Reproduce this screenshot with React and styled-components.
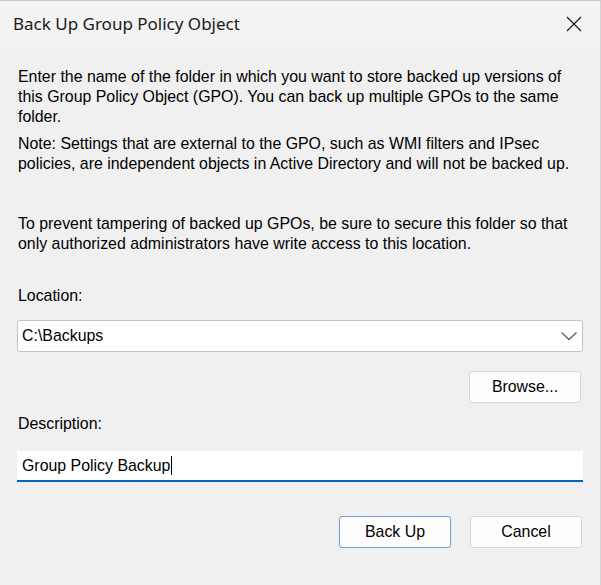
import { createGlobalStyle, styled } from "styled-components";

const GlobalStyle = createGlobalStyle`
  html, body {
    margin: 0;
    padding: 0;
    background: #f0f0f0;
  }
  body {
    font-family: "Liberation Sans", Arial, sans-serif;
  }
`;

const Window = styled.div`
  width: 601px;
  height: 585px;
  box-sizing: border-box;
  background: #f0f0f0;
  border-top: 1px solid #c8c8c8;
  border-right: 1px solid #d4d4d4;
  display: flex;
  flex-direction: column;
  color: #000;
`;

const TitleBar = styled.div`
  height: 46px;
  background: #f3f3f3;
  display: flex;
  align-items: center;
  justify-content: space-between;
  padding: 0 17px 0 13px;
  flex-shrink: 0;
`;

const Title = styled.div`
  font-family: "Noto Sans", "Open Sans", sans-serif;
  font-size: 17px;
  color: #1a1a1a;
  padding-bottom: 2px;
`;

const CloseButton = styled.button`
  border: none;
  background: transparent;
  padding: 0;
  width: 18px;
  height: 18px;
  display: flex;
  align-items: center;
  justify-content: center;
`;

const Body = styled.div`
  padding: 20px 18px 0 18px;
  display: flex;
  flex-direction: column;
`;

const Para = styled.p`
  margin: 0 0 ${(p) => p.$gap ?? 7}px 0;
  font-size: 15.9px;
  line-height: 20px;
  white-space: nowrap;
  color: #000;
`;

const Label = styled.div`
  font-size: 15.9px;
  line-height: 20px;
  margin-top: ${(p) => p.$top || 0}px;
`;

const Combo = styled.div`
  margin-top: 14px;
  margin-left: -1px;
  width: 566px;
  height: 32px;
  box-sizing: border-box;
  background: #fff;
  border: 1px solid #c4c4c4;
  border-radius: 2px;
  display: flex;
  align-items: center;
  justify-content: space-between;
  padding: 0 4px 0 4px;
  font-size: 15.9px;
`;

const TextBox = styled.div`
  margin-top: 17px;
  margin-left: -1px;
  width: 566px;
  height: 31px;
  box-sizing: border-box;
  background: #fff;
  border-bottom: 2px solid #0067c0;
  display: flex;
  align-items: center;
  padding: 0 4px 0 5px;
  font-size: 15.9px;
`;

const Caret = styled.span`
  display: inline-block;
  width: 1px;
  height: 19px;
  background: #000;
  margin-left: 1px;
`;

const ButtonRow = styled.div`
  display: flex;
  justify-content: flex-end;
  gap: ${(p) => p.$gap || 19}px;
  margin-top: ${(p) => p.$top || 0}px;
  padding-right: ${(p) => p.$right ?? 0}px;
`;

const Button = styled.button`
  width: 112px;
  height: 32px;
  box-sizing: border-box;
  background: #fdfdfd;
  border: 1px solid ${(p) => (p.$primary ? "#6b9fd8" : "#d6d6d6")};
  border-radius: 3px;
  font-family: "Liberation Sans", Arial, sans-serif;
  font-size: 15.9px;
  color: #000;
  padding: 0;
`;

export default function App() {
  return (
    <>
      <GlobalStyle />
      <Window>
        <TitleBar>
          <Title>Back Up Group Policy Object</Title>
          <CloseButton aria-label="Close">
            <svg width="16" height="16" viewBox="0 0 16 16">
              <path d="M1 1 L15 15 M15 1 L1 15" stroke="#1a1a1a" strokeWidth="1.2" fill="none" />
            </svg>
          </CloseButton>
        </TitleBar>
        <Body>
          <Para>
            Enter the name of the folder in which you want to store backed up versions of
            <br />
            this Group Policy Object (GPO). You can back up multiple GPOs to the same
            <br />
            folder.
          </Para>
          <Para $gap={40}>
            Note: Settings that are external to the GPO, such as WMI filters and IPsec
            <br />
            policies, are independent objects in Active Directory and will not be backed up.
          </Para>
          <Para $gap={0}>
            To prevent tampering of backed up GPOs, be sure to secure this folder so that
            <br />
            only authorized administrators have write access to this location.
          </Para>
          <Label $top={32}>Location:</Label>
          <Combo>
            <span>C:\Backups</span>
            <svg width="18" height="10" viewBox="0 0 18 10">
              <path d="M1.5 1.5 L9 8.5 L16.5 1.5" stroke="#606060" strokeWidth="1.3" fill="none" />
            </svg>
          </Combo>
          <ButtonRow $top={19} $right={1}>
            <Button>Browse...</Button>
          </ButtonRow>
          <Label $top={11}>Description:</Label>
          <TextBox>
            Group Policy Backup
            <Caret />
          </TextBox>
          <ButtonRow $top={34}>
            <Button $primary>Back Up</Button>
            <Button>Cancel</Button>
          </ButtonRow>
        </Body>
      </Window>
    </>
  );
}
